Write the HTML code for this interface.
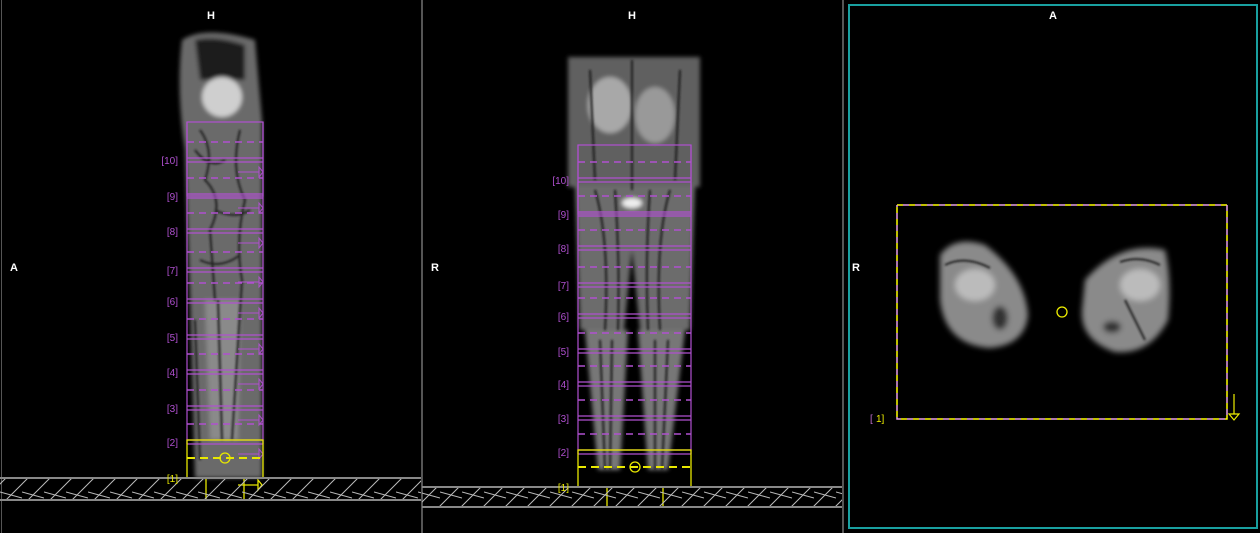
<!DOCTYPE html>
<html><head><meta charset="utf-8"><style>
html,body{margin:0;padding:0;background:#000;width:1260px;height:533px;overflow:hidden}
svg{display:block}
text{font-family:"Liberation Sans",sans-serif}
</style></head><body>
<svg id="s" width="1260" height="533" viewBox="0 0 1260 533" xmlns="http://www.w3.org/2000/svg">
<defs>
<filter id="b1"><feGaussianBlur stdDeviation="1"/></filter>
<filter id="b2"><feGaussianBlur stdDeviation="2"/></filter>
<filter id="b4"><feGaussianBlur stdDeviation="3"/></filter>
<pattern id="hatch" width="22" height="22" patternUnits="userSpaceOnUse">
<path d="M0 22 L22 0 M-5 5 L5 -5 M17 27 L27 17" stroke="#bbb" stroke-width="1"/>
<path d="M0 8 L22 14" stroke="#bbb" stroke-width="1"/>
</pattern>
</defs>
<rect width="1260" height="533" fill="#000"/>
<rect x="1" y="0" width="1" height="533" fill="#555"/>
<rect x="421" y="0" width="2" height="533" fill="#555"/>
<rect x="842" y="0" width="2" height="533" fill="#555"/>
<rect x="849" y="5" width="408" height="523" fill="none" stroke="#19a0a0" stroke-width="2"/>

<!-- left body (sagittal) -->
<g filter="url(#b2)">
<path d="M182 40 Q205 25 255 40 L262 120 L262 478 L195 478 L190 300 L185 150 Q176 90 182 40Z" fill="#6a6a6a"/>
<path d="M195 40 Q215 35 245 45 L245 80 L200 80Z" fill="#1a1a1a"/>
<ellipse cx="222" cy="97" rx="20" ry="20" fill="#cfcfcf"/>
<path d="M205 300 L240 300 L238 440 L210 440Z" fill="#8a8a8a"/>
</g>
<g filter="url(#b1)" stroke="#222" stroke-width="2" fill="none">
<path d="M200 130 Q215 150 205 180 Q225 200 210 230 L215 300"/>
<path d="M240 130 Q230 170 245 200 Q235 240 242 280 L232 440"/>
<path d="M195 150 Q210 170 225 160 M215 210 Q235 220 250 210 M200 260 Q220 270 240 255"/>
<path d="M218 300 L222 440 M195 320 L200 460"/>
</g>
<g id="leftlines"></g>
<rect x="0" y="478" width="421" height="22" fill="url(#hatch)"/>
<rect x="0" y="477" width="421" height="2" fill="#888"/>
<rect x="0" y="499" width="421" height="2" fill="#888"/>

<!-- middle body (coronal) -->
<g filter="url(#b2)">
<rect x="568" y="57" width="132" height="130" fill="#606060"/>
<ellipse cx="610" cy="105" rx="22" ry="28" fill="#a8a8a8"/>
<ellipse cx="655" cy="115" rx="20" ry="28" fill="#999"/>
<path d="M575 185 L695 185 L690 330 L640 330 L632 250 L624 330 L580 330Z" fill="#6c6c6c"/>
<path d="M585 330 L628 330 L620 470 L598 470Z" fill="#777"/>
<path d="M638 330 L685 330 L668 470 L648 470Z" fill="#777"/>
<ellipse cx="632" cy="203" rx="10" ry="5" fill="#eee"/>
</g>
<g filter="url(#b1)" stroke="#1a1a1a" stroke-width="2" fill="none">
<path d="M590 70 L595 180 M680 70 L675 180 M632 60 L632 190"/>
<path d="M595 190 Q610 240 605 330 M615 190 Q620 260 618 330 M670 190 Q655 240 660 330 M650 190 Q645 260 648 330"/>
<path d="M600 340 L605 470 M612 340 L610 470 M655 340 L655 470 M668 340 L662 470"/>
</g>
<g id="midlines"></g>
<rect x="422" y="487" width="420" height="20" fill="url(#hatch)"/>
<rect x="422" y="486" width="420" height="2" fill="#888"/>
<rect x="422" y="506" width="420" height="2" fill="#888"/>

<!-- right axial -->
<g filter="url(#b4)">
<path d="M940 255 Q955 235 985 245 Q1025 275 1028 315 Q1025 345 990 348 Q945 345 940 300Z" fill="#8a8a8a"/>
<path d="M1085 280 Q1120 240 1165 250 Q1172 280 1168 320 Q1150 355 1115 352 Q1080 340 1082 310Z" fill="#8a8a8a"/>
<ellipse cx="975" cy="285" rx="20" ry="16" fill="#bbb"/>
<ellipse cx="1140" cy="285" rx="20" ry="16" fill="#bbb"/>
<ellipse cx="1112" cy="327" rx="9" ry="6" fill="#333"/>
<ellipse cx="1000" cy="318" rx="8" ry="12" fill="#333"/>
</g>
<g filter="url(#b1)" stroke="#222" stroke-width="2" fill="none">
<path d="M945 265 Q965 255 990 268 M1120 262 Q1140 255 1160 265 M1125 300 L1145 340"/>
</g>
<rect x="897" y="205" width="330" height="214" fill="none" stroke="#ff0" stroke-width="1.5" stroke-dasharray="6 6"/>
<rect x="897" y="205" width="330" height="214" fill="none" stroke="#e8a0e8" stroke-width="1.5" stroke-dasharray="6 6" stroke-dashoffset="6"/>
<circle cx="1062" cy="312" r="5" fill="none" stroke="#ee0" stroke-width="1.3"/>
<path d="M1234 394 L1234 414 M1229 414 L1239 414 L1234 420Z" stroke="#ee0" fill="none" stroke-width="1.2"/>
<text x="870" y="422" font-size="10" fill="#c070d0">[</text><text x="876" y="422" font-size="10" fill="#ee0">1]</text>

<g fill="#fff" font-size="11" font-weight="bold" text-anchor="middle">
<text x="211" y="19">H</text><text x="632" y="19">H</text><text x="1053" y="19">A</text>
<text x="14" y="271">A</text><text x="435" y="271">R</text><text x="856" y="271">R</text>
</g>
<g id="labels" font-size="10"></g>
</svg>
<script>
var ns="http://www.w3.org/2000/svg",P="#b050d0",Y="#e8e800";
function el(p,t,a){var e=document.createElementNS(ns,t);for(var k in a)e.setAttribute(k,a[k]);p.appendChild(e);return e;}
function stack(g,x1,x2,top,ys,lx,arrows){
 el(g,"rect",{x:x1,y:top,width:x2-x1,height:ys[1]-top,fill:"none",stroke:P,"stroke-width":1.2});
 var L=document.getElementById("labels");
 for(var i=0;i<ys.length;i++){
  var y=ys[i],n=ys.length-i;
  var col=(n<=1)?Y:P;
  var t=el(L,"text",{x:lx,y:y+4,fill:col,"text-anchor":"end"});t.textContent="["+n+"]";
  if(n>=2){
   el(g,"line",{x1:x1,x2:x2,y1:y-2,y2:y-2,stroke:P,"stroke-width":1.2});
   el(g,"line",{x1:x1,x2:x2,y1:y+2,y2:y+2,stroke:P,"stroke-width":1.2});
   el(g,"line",{x1:x1,x2:x2,y1:y-18,y2:y-18,stroke:P,"stroke-width":1.5,"stroke-dasharray":"7 5"});
   if(arrows){el(g,"path",{d:"M"+(x2-25)+" "+(y+12)+" L"+(x2-4)+" "+(y+12)+" M"+(x2-4)+" "+(y+7)+" L"+(x2)+" "+(y+12)+" L"+(x2-4)+" "+(y+17)+"Z",stroke:P,fill:"none"});}
  }
 }
 el(g,"line",{x1:x1,x2:x1,y1:top,y2:ys[ys.length-2]+2,stroke:P,"stroke-width":1.2});
 el(g,"line",{x1:x2,x2:x2,y1:top,y2:ys[ys.length-2]+2,stroke:P,"stroke-width":1.2});
}
var lg=document.getElementById("leftlines");
stack(lg,187,263,122,[160,196,231,270,301,337,372,408,442,478],178,true);
el(lg,"rect",{x:187,y:440,width:76,height:38,fill:"none",stroke:Y,"stroke-width":1.3});
el(lg,"line",{x1:187,x2:263,y1:458,y2:458,stroke:Y,"stroke-width":2,"stroke-dasharray":"8 5"});
el(lg,"circle",{cx:225,cy:458,r:5,fill:"none",stroke:Y,"stroke-width":1.3});
el(lg,"path",{d:"M206 478 L206 500 M244 478 L244 500 M238 485 L258 485 M258 480 L262 485 L258 490Z",stroke:Y,fill:"none","stroke-width":1.3});
var mg=document.getElementById("midlines");
stack(mg,578,691,145,[180,214,248,285,316,351,384,418,452,487],569,false);
el(mg,"rect",{x:578,y:450,width:113,height:37,fill:"none",stroke:Y,"stroke-width":1.3});
el(mg,"line",{x1:578,x2:691,y1:467,y2:467,stroke:Y,"stroke-width":2,"stroke-dasharray":"8 5"});
el(mg,"circle",{cx:635,cy:467,r:5,fill:"none",stroke:Y,"stroke-width":1.3});
el(mg,"path",{d:"M607 487 L607 507 M663 487 L663 507",stroke:Y,fill:"none","stroke-width":1.3});
</script>
</body></html>
